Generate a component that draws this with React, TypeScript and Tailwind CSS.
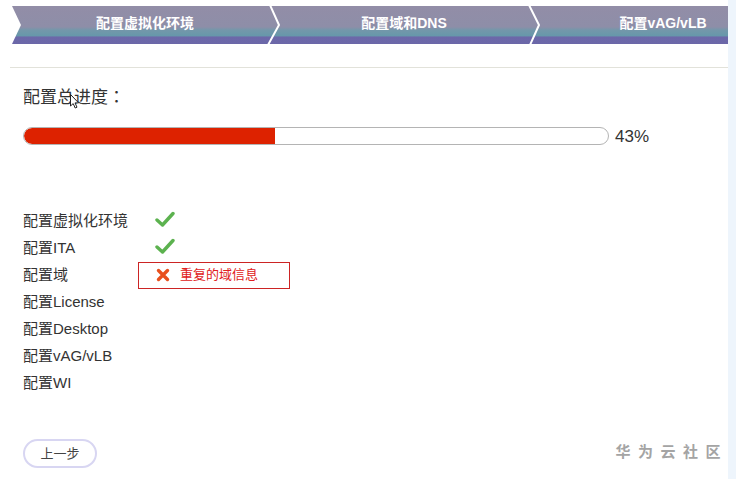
import React from "react";

const STEPS = ["配置虚拟化环境", "配置域和DNS", "配置vAG/vLB"];

const TASKS: { name: string; status?: "ok" | "error"; message?: string }[] = [
  { name: "配置虚拟化环境", status: "ok" },
  { name: "配置ITA", status: "ok" },
  { name: "配置域", status: "error", message: "重复的域信息" },
  { name: "配置License" },
  { name: "配置Desktop" },
  { name: "配置vAG/vLB" },
  { name: "配置WI" },
];

const PROGRESS = 43;

function Check() {
  return (
    <svg width="20" height="16" viewBox="0 0 20 16">
      <path d="M2 9 L7.5 14 L18 2.5" fill="none" stroke="#5cb24f" strokeWidth="3.4" strokeLinecap="round" strokeLinejoin="round" />
    </svg>
  );
}

function Cross() {
  return (
    <svg width="14" height="14" viewBox="0 0 14 14">
      <path d="M2.5 2.5 L11.5 11.5 M11.5 2.5 L2.5 11.5" stroke="#e8501e" strokeWidth="3.4" strokeLinecap="round" />
    </svg>
  );
}

export default function App() {
  return (
    <div
      className="relative w-[736px] h-[479px] bg-white overflow-hidden text-[#333]"
      style={{ fontFamily: '"Liberation Sans", "Noto Sans CJK SC", sans-serif' }}
    >
      {/* right edge strip */}
      <div className="absolute right-0 top-0 h-full w-[8px] bg-[#eef5fc]" />

      {/* Step band */}
      <div className="pt-[6px] pl-[12px]">
        <div className="relative w-[716px] h-[38px] overflow-hidden flex bg-[linear-gradient(to_bottom,#928da7_0%,#8e8ea8_55%,#7497aa_63%,#6798aa_78%,#6c68a9_82%,#6b67a8_100%)]">
          {STEPS.map((s) => (
            <div key={s} className="w-[259px] shrink-0 flex items-center justify-center pl-[7px] pb-[3px] text-white font-bold text-[14px]">
              {s}
            </div>
          ))}
          <svg className="absolute inset-0" width="716" height="38" viewBox="0 0 716 38">
            <polygon points="0,0 9,19 0,38" fill="#fff" />
            <polyline points="258,-1 267,19 256,39" fill="none" stroke="#fff" strokeWidth="2" />
            <polyline points="517,-1 527,19 518,39" fill="none" stroke="#fff" strokeWidth="2" />
          </svg>
        </div>
      </div>

      <div className="mt-[23px] ml-[10px] w-[718px] h-px bg-[#e2e2da]" />

      <div className="pl-[23px]">
        <div className="mt-[17px] text-[17px] leading-[22px]">
          配置总进度<span style={{ fontFamily: '"Noto Sans CJK TC", sans-serif' }}>：</span>
        </div>

        <div className="mt-[13px] flex items-center gap-[6px]">
          <div className="w-[586px] h-[18px] rounded-full border border-[#b4b4b4] overflow-hidden bg-white">
            <div className="h-full bg-[#dd2200] rounded-l-full" style={{ width: `${PROGRESS}%` }} />
          </div>
          <span className="text-[17px] pt-[2px]">{PROGRESS}%</span>
        </div>

        <div className="mt-[58px] flex flex-col">
          {TASKS.map((t) => (
            <div key={t.name} className="h-[27px] flex items-center">
              <span className="w-[115px] text-[15px]">{t.name}</span>
              {t.status === "ok" && (
                <span className="ml-[17px] mb-[4px]">
                  <Check />
                </span>
              )}
              {t.status === "error" && (
                <div className="h-[27px] w-[152px] border border-[#cc2424] flex items-center pl-[17px] gap-[10px]">
                  <Cross />
                  <span className="text-[13px] text-[#e02020]">{t.message}</span>
                </div>
              )}
            </div>
          ))}
        </div>
      </div>

      {/* footer */}
      <div className="absolute left-[23px] right-[8px] bottom-[11px] flex items-center justify-between">
        <button className="w-[74px] h-[29px] rounded-full border-2 border-[#d8d6f2] text-[13px] text-[#444] bg-white">
          上一步
        </button>
        <span className="mb-[2px] text-[15px] font-bold tracking-[7.5px] text-[#a4a4a4]">华为云社区</span>
      </div>

      {/* mouse cursor */}
      <svg className="absolute left-[70px] top-[94px]" width="10" height="16" viewBox="0 0 10 16">
        <path d="M0.5 0.5 L0.5 12 L3.2 9.6 L5.2 14 L7 13.2 L5 8.9 L8.6 8.9 Z" fill="#fff" stroke="#222" strokeWidth="1" strokeLinejoin="round" />
      </svg>
    </div>
  );
}
